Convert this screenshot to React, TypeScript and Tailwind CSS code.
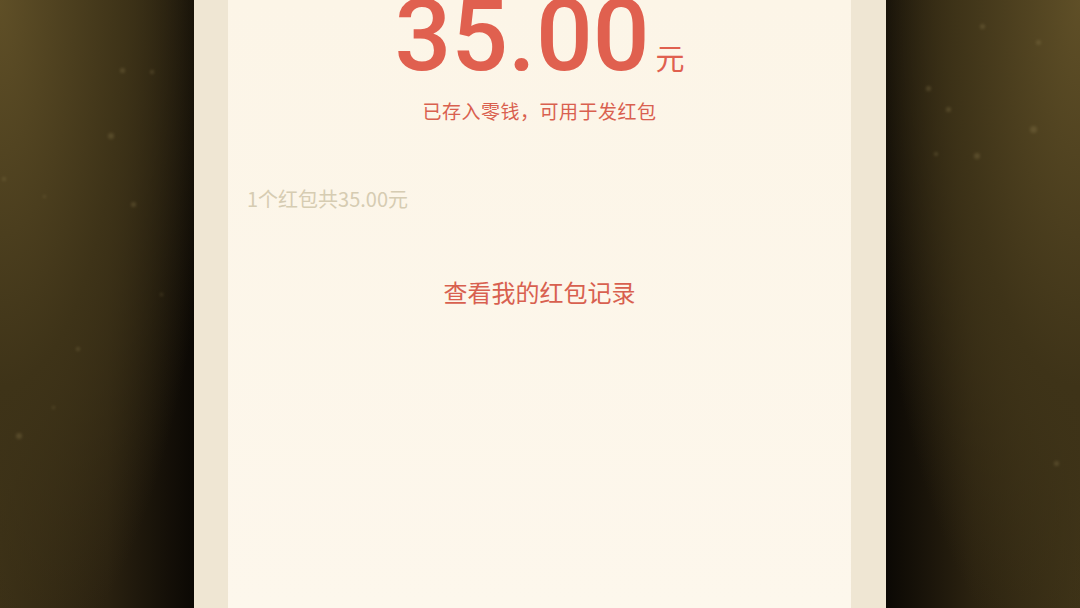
import React from 'react';

const cjk = "font-['Noto_Sans_CJK_SC','Noto_Sans',sans-serif]";

const leftDots = [
  { x: 120, y: 68, s: 5 },
  { x: 150, y: 70, s: 4 },
  { x: 108, y: 133, s: 6 },
  { x: 131, y: 202, s: 5 },
  { x: 2, y: 177, s: 4 },
  { x: 43, y: 195, s: 3 },
  { x: 160, y: 293, s: 3 },
  { x: 76, y: 347, s: 4 },
  { x: 16, y: 433, s: 6 },
  { x: 52, y: 406, s: 3 },
];

const rightDots = [
  { x: 94, y: 24, s: 5 },
  { x: 150, y: 40, s: 5 },
  { x: 40, y: 86, s: 5 },
  { x: 60, y: 107, s: 5 },
  { x: 144, y: 126, s: 7 },
  { x: 48, y: 152, s: 4 },
  { x: 88, y: 153, s: 6 },
  { x: 168, y: 461, s: 5 },
];

function SidePanel({ side, dots }: { side: 'left' | 'right'; dots: { x: number; y: number; s: number }[] }) {
  const bg =
    side === 'left'
      ? 'bg-[radial-gradient(ellipse_at_0%_0%,#5f4f27_0%,#3e3318_45%,transparent_80%),linear-gradient(90deg,#3a2f16_0%,#2a2110_55%,#0b0804_100%)]'
      : 'bg-[radial-gradient(ellipse_at_100%_0%,#5f4f27_0%,#3e3318_45%,transparent_80%),linear-gradient(270deg,#3d3217_0%,#2b2210_55%,#0b0804_100%)]';
  return (
    <div className={`relative h-full w-[194px] shrink-0 overflow-hidden ${bg}`}>
      {dots.map((d, i) => (
        <span
          key={i}
          className="absolute rounded-full bg-[#8a7a4e] opacity-35 blur-[1.5px]"
          style={{ left: d.x, top: d.y, width: d.s, height: d.s }}
        />
      ))}
    </div>
  );
}

export default function App() {
  return (
    <div className="flex h-[608px] w-[1080px] overflow-hidden bg-black">
      <SidePanel side="left" dots={leftDots} />
      <div className="flex h-full flex-1 bg-[#efe6d3]">
        <div className="ml-[34px] mr-[35px] flex h-full flex-1 flex-col items-center bg-[linear-gradient(180deg,#fcf5e7_0%,#fdf7ec_100%)]">
          <div className="-mt-[14px] flex items-baseline">
            <span className="font-['Roboto',sans-serif] text-[100px] font-medium leading-none text-[#e0604f]">35.00</span>
            <span className={`${cjk} ml-[6px] text-[29px] leading-none text-[#e0604f]`}>元</span>
          </div>
          <p className={`${cjk} mt-[12px] text-[19px] leading-[26px] tracking-[0.5px] text-[#d9604f]`}>
            已存入零钱，可用于发红包
          </p>
          <div className="mt-[62px] w-full pl-[19px]">
            <span className={`${cjk} text-[20px] leading-[26px] text-[#d6ccb2]`}>1个红包共35.00元</span>
          </div>
          <p className={`${cjk} mt-[63px] text-[24px] leading-[32px] text-[#d8604f]`}>查看我的红包记录</p>
        </div>
      </div>
      <SidePanel side="right" dots={rightDots} />
    </div>
  );
}
